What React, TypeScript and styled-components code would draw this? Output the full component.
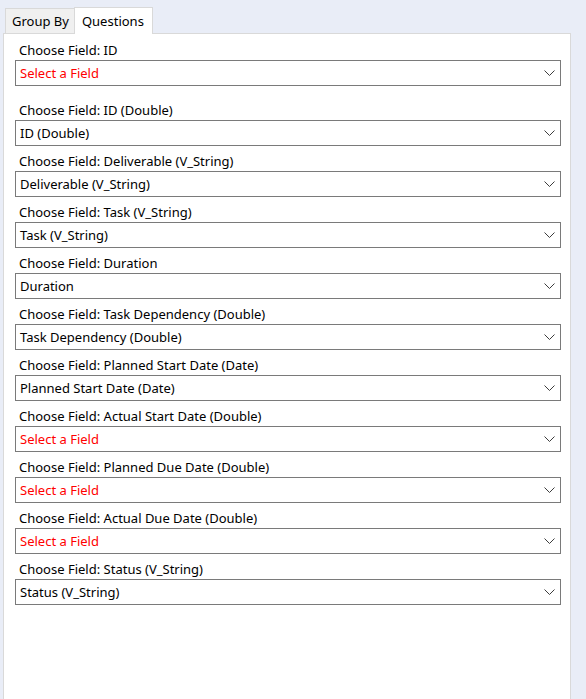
import { createGlobalStyle, styled } from "styled-components";

const GlobalStyle = createGlobalStyle`
  html, body {
    margin: 0;
    padding: 0;
    background: #e9edf7;
  }
  body {
    font-family: "Noto Sans", "Open Sans", sans-serif;
    color: #000;
  }
`;

interface FieldDef {
  name: string;
  value: string | null;
}

const fields: FieldDef[] = [
  { name: "ID", value: null },
  { name: "ID (Double)", value: "ID (Double)" },
  { name: "Deliverable (V_String)", value: "Deliverable (V_String)" },
  { name: "Task (V_String)", value: "Task (V_String)" },
  { name: "Duration", value: "Duration" },
  { name: "Task Dependency (Double)", value: "Task Dependency (Double)" },
  { name: "Planned Start Date (Date)", value: "Planned Start Date (Date)" },
  { name: "Actual Start Date (Double)", value: null },
  { name: "Planned Due Date (Double)", value: null },
  { name: "Actual Due Date (Double)", value: null },
  { name: "Status (V_String)", value: "Status (V_String)" },
];

function Chevron() {
  return (
    <svg width="11" height="6" viewBox="0 0 11 6">
      <polyline
        points="0.5,0.5 5.5,5.5 10.5,0.5"
        fill="none"
        stroke="#3c3c3c"
        strokeWidth="1"
      />
    </svg>
  );
}

export default function App() {
  return (
    <>
      <GlobalStyle />
      <Page>
        <TabBar>
          <Tab>Group By</Tab>
          <Tab $active>Questions</Tab>
        </TabBar>
        <Panel>
          {fields.map((f, i) => (
            <Field key={f.name} $first={i === 0}>
              <Label>Choose Field: {f.name}</Label>
              <SelectBox>
                <SelectText $empty={f.value === null}>
                  {f.value ?? "Select a Field"}
                </SelectText>
                <Chevron />
              </SelectBox>
            </Field>
          ))}
        </Panel>
      </Page>
    </>
  );
}

const Page = styled.div`
  width: 568px;
  min-height: 699px;
  margin-left: 3px;
  padding-top: 7px;
  box-sizing: border-box;
  display: flex;
  flex-direction: column;
`;

const TabBar = styled.div`
  display: flex;
  align-items: flex-end;
  padding-left: 2px;
  height: 27px;
  position: relative;
  z-index: 1;
  margin-bottom: -1px;
`;

const Tab = styled.div<{ $active?: boolean }>`
  box-sizing: border-box;
  height: ${({ $active }) => ($active ? "27px" : "25px")};
  margin-bottom: ${({ $active }) => ($active ? "0" : "1px")};
  margin-left: ${({ $active }) => ($active ? "-1px" : "0")};
  padding: ${({ $active }) => ($active ? "3px 8px 0 7px" : "2px 5px 0 6px")};
  border: 1px solid #d9d9d9;
  border-bottom: none;
  background: ${({ $active }) => ($active ? "#ffffff" : "#f0f0f0")};
  font-size: 13px;
  line-height: 20px;
  white-space: nowrap;
`;

const Panel = styled.div`
  flex: 1;
  background: #ffffff;
  border: 1px solid #d9d9d9;
  border-bottom: none;
  padding: 3px 9px 0 11px;
  display: flex;
  flex-direction: column;
  gap: 2px;
`;

const Field = styled.div<{ $first?: boolean }>`
  display: flex;
  flex-direction: column;
  margin-bottom: ${({ $first }) => ($first ? "9px" : "0")};
`;

const Label = styled.div`
  font-size: 13px;
  line-height: 19px;
  padding: 4px 0 0 4px;
  white-space: nowrap;
`;

const SelectBox = styled.div`
  box-sizing: border-box;
  height: 26px;
  border: 1px solid #7a7a7a;
  background: #ffffff;
  display: flex;
  align-items: center;
  justify-content: space-between;
  padding: 0 5px 0 4px;
`;

const SelectText = styled.span<{ $empty?: boolean }>`
  font-size: 13px;
  line-height: 20px;
  color: ${({ $empty }) => ($empty ? "#ff0000" : "#000000")};
  white-space: nowrap;
`;
